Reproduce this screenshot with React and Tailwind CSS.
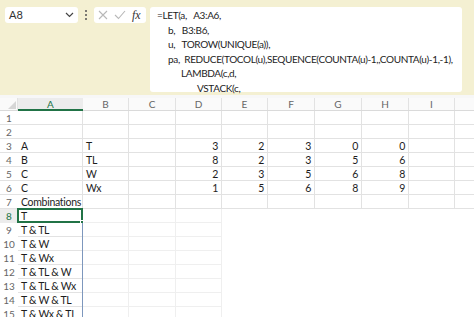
import React from "react";

const COLS = ["A", "B", "C", "D", "E", "F", "G", "H", "I"];
const WIDTHS = [65, 46, 47, 46, 46, 47, 47, 47, 46];

const data = {
  3: ["A", "T", "", 3, 2, 3, 0, 0, ""],
  4: ["B", "TL", "", 8, 2, 3, 5, 6, ""],
  5: ["C", "W", "", 2, 3, 5, 6, 8, ""],
  6: ["C", "Wx", "", 1, 5, 6, 8, 9, ""],
  7: ["Combinations", "", "", "", "", "", "", "", ""],
  8: ["T"],
  9: ["T & TL"],
  10: ["T & W"],
  11: ["T & Wx"],
  12: ["T & TL & W"],
  13: ["T & TL & Wx"],
  14: ["T & W & TL"],
  15: ["T & Wx & TL"],
};

function Cell({ row, ci, value }) {
  const isNum = typeof value === "number";
  const lower = row >= 8;
  let border = "border-r border-b border-[#e2e2e2]";
  if (lower) {
    if (ci === 0) border = "border-b border-[#e2e2e2]";
    else if (ci <= 3) border = "border-r border-b border-[#efefef]";
    else border = "";
  }
  return (
    <div
      className={`h-[14px] shrink-0 overflow-visible whitespace-nowrap text-[10.5px] tracking-[-0.3px] leading-[14px] text-[#1d1d1d] ${border} ${
        isNum ? "text-right pr-[3px]" : "pl-[3px]"
      }`}
      style={{ width: WIDTHS[ci] }}
    >
      {value === undefined ? "" : value}
    </div>
  );
}

export default function App() {
  const rows = Array.from({ length: 15 }, (_, i) => i + 1);
  return (
    <div
      className="w-[474px] h-[325px] overflow-hidden bg-white relative"
      style={{ fontFamily: "Lato, 'Open Sans', sans-serif" }}
    >
      {/* top bar */}
      <div className="h-[95px] bg-[#f4f0d2] flex items-start pt-[7px]">
        <div className="ml-[5px] w-[73px] h-[16px] bg-white rounded-[3px] flex items-center justify-between pl-[4px] pr-[4px] text-[11px] text-[#333]">
          <span>A8</span>
          <svg width="9" height="6" viewBox="0 0 9 6">
            <path d="M1 1 L4.5 4.5 L8 1" stroke="#444" strokeWidth="1.2" fill="none" />
          </svg>
        </div>
        <div className="w-[16px] h-[16px] flex flex-col items-center justify-center gap-[2px]">
          <div className="w-[2px] h-[2px] bg-[#555] rounded-full" />
          <div className="w-[2px] h-[2px] bg-[#555] rounded-full" />
          <div className="w-[2px] h-[2px] bg-[#555] rounded-full" />
        </div>
        <div className="w-[52px] h-[16px] bg-white rounded-[3px] flex items-center pl-[4px] gap-[6px]">
          <svg width="10" height="10" viewBox="0 0 10 10">
            <path d="M1 1 L9 9 M9 1 L1 9" stroke="#b8b8b8" strokeWidth="1.1" />
          </svg>
          <svg width="12" height="10" viewBox="0 0 12 10">
            <path d="M1 5 L4.5 8.5 L11 1" stroke="#b8b8b8" strokeWidth="1.1" fill="none" />
          </svg>
          <span
            className="text-[12px] italic text-[#333] leading-none"
            style={{ fontFamily: "'Liberation Serif', serif" }}
          >
            fx
          </span>
        </div>
        <div className="ml-[4px] w-[312px] h-[85px] bg-white rounded-[3px] pl-[7px] pt-[1px] text-[10px] tracking-[-0.35px] leading-[14.5px] text-[#1d1d1d] whitespace-pre">
          <div>{"=LET(a,   A3:A6,"}</div>
          <div className="pl-[11px]">{"b,   B3:B6,"}</div>
          <div className="pl-[11px]">{"u,   TOROW(UNIQUE(a)),"}</div>
          <div className="pl-[11px]">{"pa,  REDUCE(TOCOL(u),SEQUENCE(COUNTA(u)-1,,COUNTA(u)-1,-1),"}</div>
          <div className="pl-[24px]">{"LAMBDA(c,d,"}</div>
          <div className="pl-[40px]">{"VSTACK(c,"}</div>
        </div>
      </div>
      <div className="h-[3px] bg-[#f7f7f7]" />

      {/* header row */}
      <div className="flex h-[13px] bg-[#fafafa] border-b border-[#dadada]">
        <div className="w-[18px] shrink-0 relative border-r border-[#e2e2e2]">
          <svg className="absolute right-[1px] bottom-[1px]" width="8" height="8" viewBox="0 0 8 8">
            <path d="M8 0 L8 8 L0 8 Z" fill="#d6d6d6" />
          </svg>
        </div>
        {COLS.map((c, i) => (
          <div
            key={c}
            className={`shrink-0 text-center text-[10px] leading-[12px] ${
              i === 0
                ? "text-[#217346] bg-[#ececec] border-b-2 border-[#217346] -mb-[1px]"
                : "text-[#666] border-r border-[#e2e2e2]"
            }`}
            style={{ width: WIDTHS[i] }}
          >
            {c}
          </div>
        ))}
        <div className="flex-1" />
      </div>

      {/* rows */}
      <div className="relative">
        {rows.map((r) => (
          <div key={r} className="flex">
            <div
              className={`w-[18px] shrink-0 h-[14px] text-center text-[10px] leading-[14px] ${
                r === 8 ? "text-[#217346] bg-[#ececec]" : "text-[#666]"
              } ${r < 8 ? "border-b border-[#e2e2e2]" : ""}`}
            >
              {r}
            </div>
            {COLS.map((c, ci) => (
              <Cell key={c} row={r} ci={ci} value={data[r] ? data[r][ci] : undefined} />
            ))}
            <div className={`flex-1 h-[14px] ${r < 8 ? "border-b border-[#e2e2e2]" : ""}`} />
          </div>
        ))}
        {/* selected cell A8 */}
        <div className="absolute left-[17px] top-[97px] w-[66px] h-[15px] border-2 border-[#217346] pointer-events-none">
          <div className="absolute -right-[3px] -bottom-[3px] w-[4px] h-[4px] bg-[#217346] border border-white" />
        </div>
        {/* spill border */}
        <div className="absolute left-[82px] top-[112px] w-[1px] h-[96px] bg-[#7d97bd]" />
      </div>
      <div className="absolute left-0 right-0 top-[317px] bottom-0 bg-white" />
    </div>
  );
}
